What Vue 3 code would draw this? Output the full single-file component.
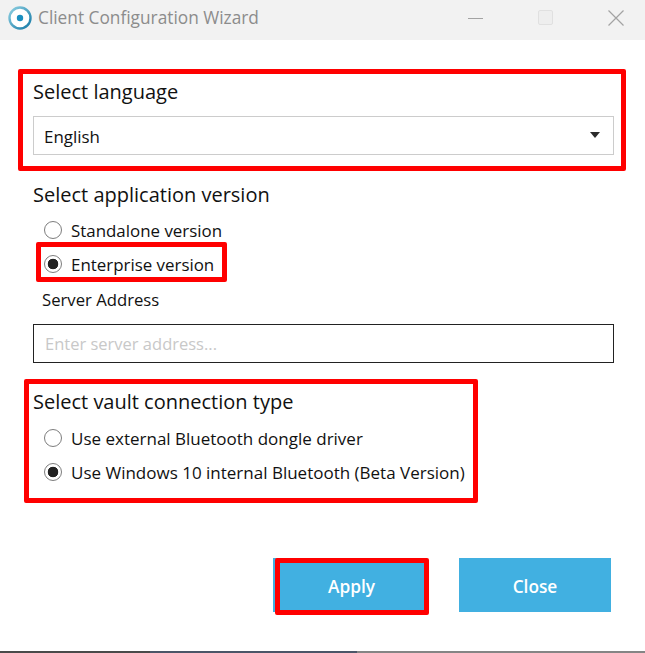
<script setup>
const versions = [
  { label: 'Standalone version', checked: false, marked: false },
  { label: 'Enterprise version', checked: true, marked: true },
]
const vaults = [
  { label: 'Use external Bluetooth dongle driver', checked: false },
  { label: 'Use Windows 10 internal Bluetooth (Beta Version)', checked: true },
]
</script>

<template>
  <div class="window">
    <header class="titlebar">
      <svg class="logo" width="26" height="26" viewBox="0 0 26 26">
        <defs>
          <linearGradient id="ring" x1="0" y1="0" x2="1" y2="1">
            <stop offset="0" stop-color="#8fd0e2" />
            <stop offset="1" stop-color="#1479a6" />
          </linearGradient>
        </defs>
        <circle cx="13" cy="13" r="10.5" fill="#fff" stroke="url(#ring)" stroke-width="2.4" />
        <circle cx="13" cy="13" r="3.2" fill="#1a8fc0" />
      </svg>
      <span class="title">Client Configuration Wizard</span>
      <div class="controls">
        <svg width="16" height="16" viewBox="0 0 16 16"><path d="M0 8.5H15" stroke="#a3a3a3" fill="none" /></svg>
        <svg width="16" height="16" viewBox="0 0 16 16"><rect x="0.5" y="0.5" width="14" height="14" rx="1.5" fill="#eeeeee" stroke="#e0e0e0" /></svg>
        <svg width="16" height="16" viewBox="0 0 16 16"><path d="M0.5 0.5L15.5 15.5M15.5 0.5L0.5 15.5" stroke="#a3a3a3" stroke-width="1.2" fill="none" /></svg>
      </div>
    </header>

    <main class="content">
      <section class="language marked">
        <h2 class="heading">Select language</h2>
        <div class="select">
          <span class="select-text">English</span>
          <span class="caret"></span>
        </div>
      </section>

      <section class="version">
        <h2 class="heading">Select application version</h2>
        <div class="options">
          <label v-for="v in versions" :key="v.label" class="option" :class="{ 'marked-option': v.marked }">
            <span class="radio" :class="{ on: v.checked }"></span>
            <span>{{ v.label }}</span>
          </label>
        </div>
        <div class="server-label">Server Address</div>
        <div class="input">Enter server address...</div>
      </section>

      <section class="vault">
        <div class="vault-box marked">
          <h2 class="heading">Select vault connection type</h2>
          <div class="options">
            <label v-for="v in vaults" :key="v.label" class="option">
              <span class="radio" :class="{ on: v.checked }"></span>
              <span>{{ v.label }}</span>
            </label>
          </div>
        </div>
      </section>

      <footer class="actions">
        <button class="btn apply">Apply</button>
        <button class="btn">Close</button>
      </footer>
    </main>
    <div class="bottom-line">
      <span class="seg seg-dark"></span>
      <span class="seg seg-slate"></span>
      <span class="seg seg-gray"></span>
    </div>
  </div>
</template>

<style>
html, body { margin: 0; background: #fff; }
</style>

<style scoped>
.window {
  width: 645px;
  height: 653px;
  position: relative;
  overflow: hidden;
  background: #fff;
  font-family: "Open Sans", "Noto Sans", sans-serif;
  color: #111;
  display: flex;
  flex-direction: column;
}
.titlebar {
  height: 40px;
  flex: none;
  background: #f2f2f2;
  display: flex;
  align-items: center;
  padding: 0 0 5px 7px;
  box-sizing: border-box;
}
.logo { flex: none; }
.title {
  margin-left: 5px;
  font-size: 17.3px;
  color: #8c8c8c;
}
.controls {
  margin-left: auto;
  margin-right: 21px;
  display: flex;
  gap: 54px;
}
.content {
  flex: 1;
  padding: 0 31px 0 33px;
  display: flex;
  flex-direction: column;
}
.heading {
  margin: 0;
  font-size: 20px;
  font-weight: 400;
  line-height: 26px;
}
.marked { position: relative; }
.marked::after {
  content: "";
  position: absolute;
  border: 5px solid #ff0000;
  border-radius: 2px;
  pointer-events: none;
}
.language { margin-top: 39px; }
.language::after { left: -15px; right: -12px; top: -10px; bottom: -16px; }
.select {
  margin-top: 11px;
  height: 39px;
  box-sizing: border-box;
  border: 1px solid #cccccc;
  display: flex;
  align-items: center;
  justify-content: space-between;
  padding: 0 13px 0 10px;
  font-size: 16.9px;
}
.select-text { padding-top: 2px; }
.caret {
  border-left: 5.5px solid transparent;
  border-right: 5.5px solid transparent;
  border-top: 6px solid #2b2b2b;
  margin-bottom: 2px;
}
.version { margin-top: 27px; }
.options {
  display: flex;
  flex-direction: column;
  margin-top: 6px;
}
.version .options { margin-top: 5px; }
.option {
  position: relative;
  height: 34px;
  display: flex;
  align-items: center;
  padding-left: 11px;
  gap: 9px;
  font-size: 16.9px;
}
.vault .option { font-size: 17px; }
.radio {
  width: 18px;
  height: 18px;
  box-sizing: border-box;
  border: 1.3px solid #7d7d7d;
  border-radius: 50%;
  flex: none;
  background: #fff;
}
.radio.on {
  background: radial-gradient(circle, #222 0 5px, #fff 5.6px);
}
.marked-option::after {
  content: "";
  position: absolute;
  left: 3px;
  top: -5px;
  width: 191px;
  height: 40px;
  box-sizing: border-box;
  border: 5px solid #ff0000;
  border-radius: 2px;
}
.server-label {
  margin-top: 8px;
  padding-left: 9px;
  font-size: 16.7px;
  line-height: 22px;
}
.input {
  margin-top: 13px;
  height: 39px;
  box-sizing: border-box;
  border: 1px solid #222;
  display: flex;
  align-items: center;
  padding-left: 11px;
  font-size: 16.5px;
  color: #c8c8c8;
}
.vault { margin-top: 26px; }
.vault-box { width: fit-content; }
.vault-box::after { left: -9px; right: -13px; top: -10px; bottom: -14px; }
.actions {
  margin-top: auto;
  margin-bottom: 39px;
  margin-right: 3px;
  display: flex;
  justify-content: flex-end;
  gap: 34px;
}
.btn {
  width: 152px;
  height: 54px;
  border: none;
  background: #41b0e1;
  color: #fff;
  font-family: inherit;
  font-size: 17.3px;
  font-weight: 600;
  padding: 2px 0 0;
}
.apply {
  position: relative;
  padding-left: 5px;
}
.apply::after {
  content: "";
  position: absolute;
  left: 2px;
  right: -4px;
  top: 0;
  bottom: -3px;
  border: 5px solid #ff0000;
  border-radius: 2px;
}
.bottom-line {
  height: 2px;
  flex: none;
  display: flex;
}
.seg { display: block; }
.seg-dark { width: 150px; background: #4a4a4a; }
.seg-slate { width: 207px; background: #4b5668; }
.seg-gray { flex: 1; background: #858585; }
</style>
